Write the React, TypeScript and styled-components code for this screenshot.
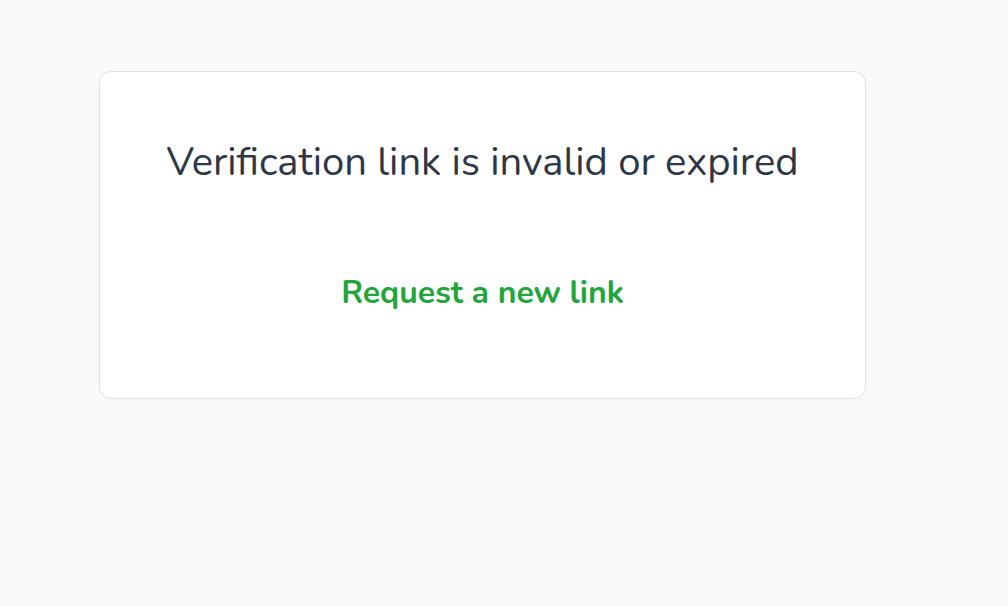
import React from 'react';
import styled, { createGlobalStyle } from 'styled-components';

const GlobalStyle = createGlobalStyle`
  html, body {
    margin: 0;
    padding: 0;
    background-color: #f8f9fa;
  }
  body {
    font-family: "Nunito", "Lato", "Open Sans", sans-serif;
  }
`;

const Page = styled.main`
  min-height: 606px;
  padding: 71px 0 0 99px;
  box-sizing: border-box;
`;

const Card = styled.section`
  width: 767px;
  box-sizing: border-box;
  display: flex;
  flex-direction: column;
  align-items: center;
  gap: 88px;
  padding: 66px 24px 86px;
  background-color: #ffffff;
  border: 1px solid #e0e0e2;
  border-radius: 12px;
`;

const Title = styled.h1`
  margin: 0;
  font-size: 40px;
  line-height: 48px;
  font-weight: 400;
  color: #2d3748;
  text-align: center;
`;

const Action = styled.a`
  font-size: 32px;
  line-height: 38px;
  font-weight: 700;
  color: #22a53a;
  text-decoration: none;
  cursor: pointer;
`;

export default function App() {
  return (
    <>
      <GlobalStyle />
      <Page>
        <Card>
          <Title>Verification link is invalid or expired</Title>
          <Action href="#">Request a new link</Action>
        </Card>
      </Page>
    </>
  );
}
